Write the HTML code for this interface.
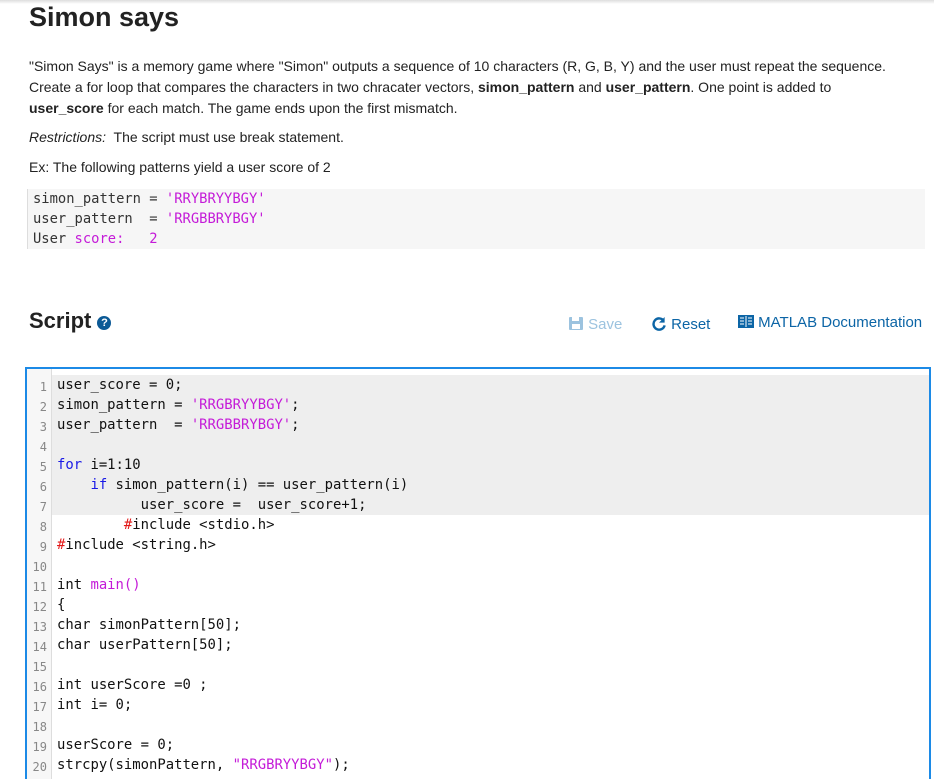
<!DOCTYPE html>
<html><head><style>
body{margin:0;width:934px;height:772px;overflow:hidden;background:#fff;font-family:"Liberation Sans",Arial,sans-serif;color:#222;position:relative}
.top{position:absolute;left:0;top:0;width:934px;height:4px;background:linear-gradient(#ddd,#fff)}
h1{position:absolute;left:29px;top:2px;margin:0;font-size:27px;font-weight:bold;color:#222}
.p{position:absolute;left:29px;font-size:14px;line-height:21px;color:#222;margin:0}
.ex{position:absolute;left:27px;top:189px;width:892px;height:60px;background:#f6f6f6;border-left:1px solid #ddd;font-family:"DejaVu Sans Mono",monospace;font-size:13.8px;line-height:20px;padding-left:5px;color:#333;white-space:pre}
.m{color:#c41bd8}
h2{position:absolute;left:29px;top:308px;margin:0;font-size:22px;font-weight:bold;color:#222}
.q{display:inline-block;width:14px;height:14px;border-radius:50%;background:#0c5a96;color:#fff;font-size:11px;text-align:center;line-height:14px;vertical-align:2px}
.tb{position:absolute;top:316px;font-size:15px;color:#0c65a6}
.ed{position:absolute;left:25px;top:367px;width:902px;height:410px;border:2px solid #1c8ae6;border-bottom:none;overflow:hidden}
.gut{position:absolute;left:0;top:0;width:24px;height:420px;background:#f7f7f7;border-right:1px solid #ddd}
.hl{position:absolute;left:25px;top:6px;width:880px;height:140px;background:#eee}
.ln{position:absolute;left:0;width:20px;text-align:right;font-family:"DejaVu Sans Mono",monospace;font-size:12px;color:#888}
.cd{position:absolute;left:30px;font-family:"DejaVu Sans Mono",monospace;font-size:13.9px;white-space:pre;color:#111}
.k{color:#1a1ae6}.r{color:#e31a1a}
</style></head><body>
<div class="top"></div>
<h1>Simon says</h1>
<p class="p" style="top:56px">"Simon Says" is a memory game where "Simon" outputs a sequence of 10 characters (R, G, B, Y) and the user must repeat the sequence.<br>Create a for loop that compares the characters in two chracater vectors, <b>simon_pattern</b> and <b>user_pattern</b>. One point is added to<br><b>user_score</b> for each match. The game ends upon the first mismatch.</p>
<p class="p" style="top:127px"><i>Restrictions:</i>&nbsp; The script must use break statement.</p>
<p class="p" style="top:157px">Ex: The following patterns yield a user score of 2</p>
<div class="ex">simon_pattern = <span class="m">'RRYBRYYBGY'</span>
user_pattern  = <span class="m">'RRGBBRYBGY'</span>
User <span class="m">score:   2</span></div>
<h2>Script <span class="q">?</span></h2>
<div class="tb" style="left:568px;color:#9cc3df"><svg width="16" height="15" viewBox="0 0 16 15" style="vertical-align:-2px"><rect x="1" y="1" width="14" height="13" rx="1" fill="#9cc3df"/><rect x="4" y="1" width="7" height="4" fill="#fff"/><rect x="4" y="8" width="8" height="5" fill="#fff"/></svg> Save</div>
<div class="tb" style="left:651px"><svg width="16" height="15" viewBox="0 0 16 16" style="vertical-align:-2px"><path d="M13 5A6 6 0 1 0 14 10" stroke="#0c65a6" stroke-width="2.6" fill="none"/><path d="M14 1v6h-6z" fill="#0c65a6"/></svg> Reset</div>
<div class="tb" style="left:738px;top:314px"><svg width="16" height="15" viewBox="0 0 16 15" style="vertical-align:-2px"><rect x="0" y="1" width="16" height="13" fill="#0c65a6"/><path d="M8 2v11M2 4h4M2 7h4M2 10h4M10 4h4M10 7h4M10 10h4" stroke="#fff" stroke-width="1"/></svg> MATLAB Documentation</div>
<div class="ed">
<div class="gut"></div>
<div class="hl"></div>
<div class="ln" style="top:8px;line-height:20px">1<br>2<br>3<br>4<br>5<br>6<br>7<br>8<br>9<br>10<br>11<br>12<br>13<br>14<br>15<br>16<br>17<br>18<br>19<br>20</div>
<div class="cd" style="top:6px;line-height:20px">user_score = 0;
simon_pattern = <span class="m">'RRGBRYYBGY'</span>;
user_pattern  = <span class="m">'RRGBBRYBGY'</span>;

<span class="k">for</span> i=1:10
    <span class="k">if</span> simon_pattern(i) == user_pattern(i)
          user_score =  user_score+1;
        <span class="r">#</span>include &lt;stdio.h&gt;
<span class="r">#</span>include &lt;string.h&gt;

int <span class="m">main()</span>
{
char simonPattern[50];
char userPattern[50];

int userScore =0 ;
int i= 0;

userScore = 0;
strcpy(simonPattern, <span class="m">"RRGBRYYBGY"</span>);</div>
</div>
</body></html>
